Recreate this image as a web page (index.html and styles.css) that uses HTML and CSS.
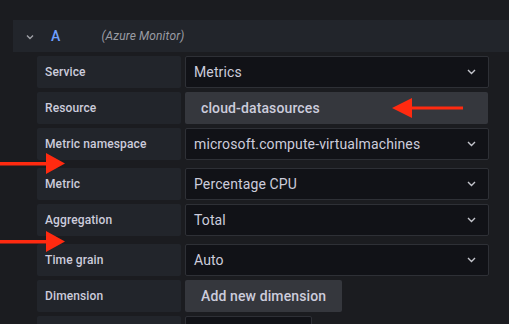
FILE: index.html
```html
<!DOCTYPE html>
<html lang="en">
<head>
    <meta charset="UTF-8">
    <meta name="viewport" content="width=device-width, initial-scale=1.0">
    <title>Query editor</title>
    <link rel="stylesheet" href="styles.css">
</head>
<body>
    <div class="editor">
        <div class="query-header">
            <svg class="collapse" width="8" height="6" viewBox="0 0 8 6"><path d="M1 1.5 L4 4.5 L7 1.5" fill="none" stroke="#9fa1a7" stroke-width="1.4"/></svg>
            <span class="ref-id">A</span>
            <span class="ds-name">(Azure Monitor)</span>
        </div>
        <div class="fields">
            <div class="row">
                <label class="field-label">Service</label>
                <div class="select">Metrics<svg class="caret" width="9" height="6" viewBox="0 0 9 6"><path d="M1 1 L4.5 4.5 L8 1" fill="none" stroke="#c4c5cc" stroke-width="1.4"/></svg></div>
            </div>
            <div class="row">
                <label class="field-label">Resource</label>
                <button class="btn wide">cloud-datasources</button>
            </div>
            <div class="row group-end">
                <label class="field-label">Metric namespace</label>
                <div class="select">microsoft.compute-virtualmachines<svg class="caret" width="9" height="6" viewBox="0 0 9 6"><path d="M1 1 L4.5 4.5 L8 1" fill="none" stroke="#c4c5cc" stroke-width="1.4"/></svg></div>
            </div>
            <div class="row">
                <label class="field-label">Metric</label>
                <div class="select">Percentage CPU<svg class="caret" width="9" height="6" viewBox="0 0 9 6"><path d="M1 1 L4.5 4.5 L8 1" fill="none" stroke="#c4c5cc" stroke-width="1.4"/></svg></div>
            </div>
            <div class="row group-end">
                <label class="field-label">Aggregation</label>
                <div class="select">Total<svg class="caret" width="9" height="6" viewBox="0 0 9 6"><path d="M1 1 L4.5 4.5 L8 1" fill="none" stroke="#c4c5cc" stroke-width="1.4"/></svg></div>
            </div>
            <div class="row">
                <label class="field-label">Time grain</label>
                <div class="select">Auto<svg class="caret" width="9" height="6" viewBox="0 0 9 6"><path d="M1 1 L4.5 4.5 L8 1" fill="none" stroke="#c4c5cc" stroke-width="1.4"/></svg></div>
            </div>
            <div class="row">
                <label class="field-label">Dimension</label>
                <button class="btn">Add new dimension</button>
            </div>
            <div class="row">
                <label class="field-label"></label>
                <div class="select short"></div>
            </div>
        </div>
    </div>

    <!-- annotation arrows -->
    <svg class="arrow arrow-resource" width="72" height="22" viewBox="0 0 72 22"><path d="M71 9.5 H20 V1 L0 11 L20 21 V12.5 H71 Z" fill="#ff2a10"/></svg>
    <svg class="arrow arrow-namespace" width="66" height="22" viewBox="0 0 66 22"><path d="M0 9 H46 V0 L65 10.5 L46 21 V12.5 H0 Z" fill="#ff2a10"/></svg>
    <svg class="arrow arrow-aggregation" width="66" height="22" viewBox="0 0 66 22"><path d="M0 9 H46 V0 L65 10.5 L46 21 V12.5 H0 Z" fill="#ff2a10"/></svg>
</body>
</html>
```

FILE: styles.css
```css
body {
    margin: 0;
    padding: 0;
    background-color: #1b1c20;
    font-family: Roboto, "Liberation Sans", sans-serif;
    letter-spacing: 0.12px;
    color: #ccccdc;
    overflow: hidden;
}
.editor {
    padding: 20px 0 0 13px;
}
.query-header {
    display: flex;
    align-items: center;
    height: 32px;
    padding-left: 13px;
    background-color: #22252b;
}
.collapse {
    margin-top: 1px;
}
.ref-id {
    margin-left: 17px;
    color: #6e9fff;
    font-size: 14px;
    font-weight: 500;
}
.ds-name {
    margin-left: 41px;
    color: #9a9ca3;
    font-size: 12px;
    font-style: italic;
}
.fields {
    margin: 4px 0 0 24px;
}
.row {
    display: flex;
    height: 32px;
    margin-bottom: 4px;
}
.row.group-end {
    margin-bottom: 8px;
}
.field-label {
    display: flex;
    align-items: center;
    width: 144px;
    margin-right: 4px;
    padding: 0 8px;
    box-sizing: border-box;
    background-color: #22252b;
    border-radius: 2px;
    font-size: 12px;
    font-weight: 500;
    color: #ccccdc;
}
.select {
    display: flex;
    align-items: center;
    justify-content: space-between;
    width: 304px;
    padding: 0 12px 0 8px;
    box-sizing: border-box;
    background-color: #111217;
    border: 1px solid #2e3036;
    border-radius: 2px;
    font-size: 14px;
    color: #ccccdc;
}
.select.short {
    width: 127px;
}
.caret {
    flex-shrink: 0;
}
.btn {
    height: 32px;
    padding: 0 16px;
    background-color: #35373d;
    border: none;
    border-radius: 2px;
    font-family: Roboto, "Liberation Sans", sans-serif;
    font-size: 14px;
    font-weight: 500;
    letter-spacing: 0.12px;
    color: #ccccdc;
    text-align: left;
}
.btn.wide {
    width: 303px;
}
.arrow {
    position: absolute;
}
.arrow-resource {
    left: 392px;
    top: 97px;
}
.arrow-namespace {
    left: 0;
    top: 153px;
}
.arrow-aggregation {
    left: 0;
    top: 231px;
}
```
